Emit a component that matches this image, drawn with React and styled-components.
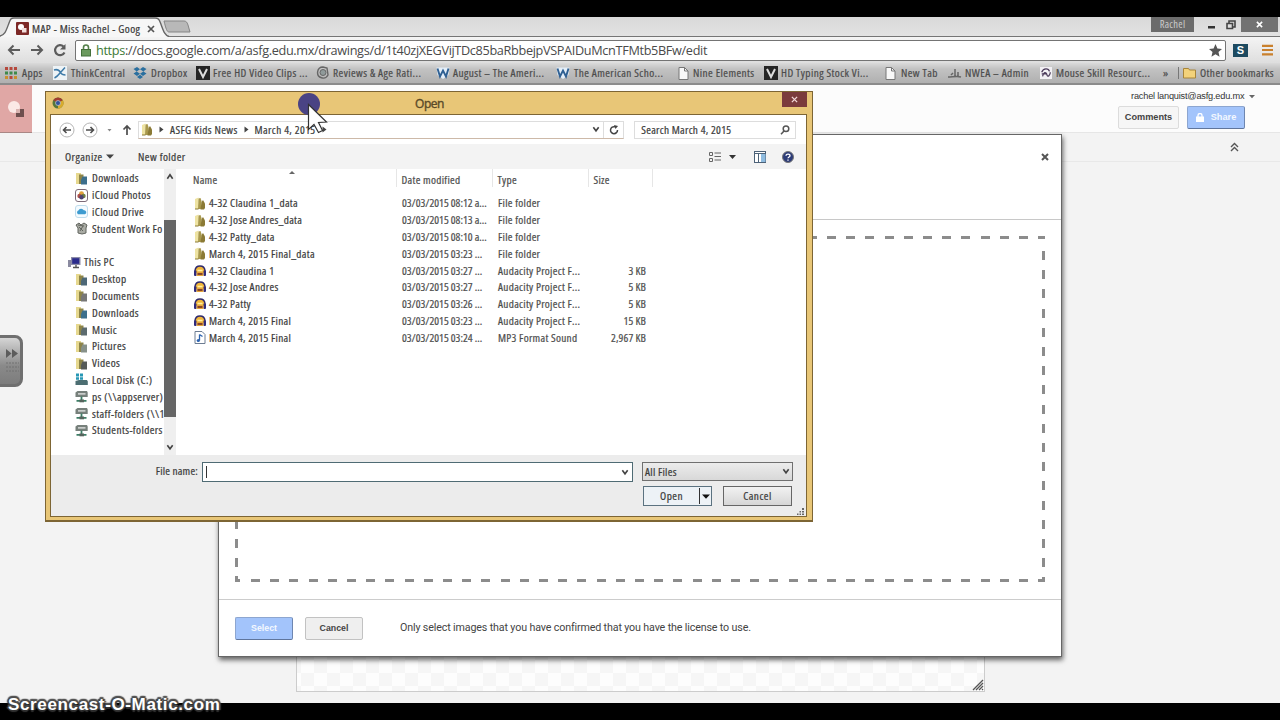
import React from 'react'
import styled, { createGlobalStyle, css } from 'styled-components'

const GlobalStyle = createGlobalStyle`
  * {
    box-sizing: border-box;
  }
  body {
    margin: 0;
    background: #000;
    overflow: hidden;
  }
`

const segoe = `"Open Sans", "Noto Sans", sans-serif`
const arial = `"Liberation Sans", Arial, sans-serif`

const Screen = styled.div`
  position: relative;
  width: 1280px;
  height: 720px;
  padding: 17px 0;
  background: #000;
  overflow: hidden;
  display: flex;
  flex-direction: column;
  font-family: ${segoe};
  font-size: 11.3px;
  font-stretch: 75%;
  letter-spacing: 0.3px;
  color: #444;
  white-space: nowrap;
`

/* ---------- browser ---------- */

const TabStrip = styled.div`
  height: 20px;
  flex: none;
  display: flex;
  align-items: flex-start;
  background: linear-gradient(#d9d9d9, #e2e2e2);
  border-bottom: 1px solid #757575;
`
const Tab = styled.div`
  position: relative;
  width: 168px;
  height: 20px;
  padding: 3px 9px 0 16px;
  display: flex;
  align-items: center;
`
const TabShape = styled.svg`
  position: absolute;
  left: 0;
  top: 0;
`
const TabIcon = styled.svg`
  position: relative;
  flex: none;
`
const TabTitle = styled.span`
  position: relative;
  width: 116px;
  padding-left: 3px;
  line-height: 16px;
  letter-spacing: 0.4px;
  color: #3a3a3a;
  -webkit-text-stroke: 0.2px #3a3a3a;
`
const TabClose = styled.svg`
  position: relative;
  margin-left: 2px;
`
const Spacer = styled.div`
  flex: 1;
`
const UserBadge = styled.div`
  width: 43px;
  height: 15px;
  margin-right: 10px;
  background: #6b6b6b;
  color: #ccc;
  font-size: 10.5px;
  line-height: 15px;
  text-align: center;
`
const WindowButton = styled.div`
  width: ${(p) => p.$w}px;
  height: 15px;
  display: flex;
  align-items: center;
  justify-content: center;
  background: ${(p) => (p.$dark ? '#727272' : 'transparent')};
`
const Toolbar = styled.div`
  height: 26px;
  flex: none;
  display: flex;
  align-items: center;
  background: linear-gradient(#f4f4f4, #dedede);
`
const NavButtons = styled.div`
  width: 75px;
  padding-left: 7px;
  display: flex;
  gap: 9px;
`
const UrlBar = styled.div`
  width: 1151px;
  height: 21px;
  padding: 0 3px 0 5px;
  display: flex;
  align-items: center;
  background: #fff;
  border: 1px solid #747474;
  border-radius: 2px;
`
const Url = styled.span`
  flex: 1;
  margin-left: 5px;
  font-size: 12.7px;
  line-height: 18px;
  font-stretch: 100%;
  letter-spacing: -0.34px;
  color: #4a4a4a;
  b {
    font-weight: 400;
    color: #3d7a35;
  }
`
const ExtIcon = styled.div`
  width: 15px;
  height: 13px;
  margin: 0 14px 0 7px;
  background: #1d4a60;
  color: #fff;
  font: 700 11px/13px ${arial};
  text-align: center;
`
const Bookmarks = styled.div`
  height: 22px;
  flex: none;
  padding-left: 4px;
  display: flex;
  align-items: center;
  background: linear-gradient(#dadada, #c2c2c2 30%, #b0b0b0);
  border-bottom: 2px solid #8b8b8b;
`
const Bookmark = styled.div`
  width: ${(p) => p.$w}px;
  flex: none;
  display: flex;
  align-items: center;
  line-height: 16px;
  letter-spacing: 0.42px;
  color: #4c4c4c;
  -webkit-text-stroke: 0.2px #4c4c4c;
  svg {
    flex: none;
    margin-right: ${(p) => p.$gap || 3}px;
  }
`
const BookmarkDivider = styled.div`
  width: 1px;
  height: 12px;
  margin-right: 4px;
  background: #777;
`

/* ---------- page ---------- */

const Page = styled.div`
  position: relative;
  flex: 1;
  background: #f3f3f3;
`
const DocHeader = styled.div`
  height: 48px;
  display: flex;
  justify-content: space-between;
  background: #fcfcfc;
  border-bottom: 1px solid #e6e6e6;
`
const DocLogo = styled.div`
  width: 32px;
  height: 48px;
  padding: 15px 0 0 7px;
  background: #e0a7a5;
  border-bottom: 1px solid #a98785;
`
const Account = styled.div`
  padding: 5px 25px 0 0;
  display: flex;
  flex-direction: column;
  align-items: flex-end;
  font: 9.2px/13px ${arial};
  letter-spacing: -0.2px;
  color: #333;
`
const Buttons = styled.div`
  display: flex;
  gap: 8px;
  margin: 3px 10px 0 0;
`
const DocToolbar = styled.div`
  height: 29px;
  padding: 9px 41px 0 0;
  display: flex;
  justify-content: flex-end;
  border-bottom: 1px solid #e8e8e8;
`
const Canvas = styled.div`
  width: 689px;
  height: 530px;
  margin-left: 296px;
  display: flex;
  align-items: flex-end;
  justify-content: flex-end;
  background: repeating-conic-gradient(#f6f6f6 0 25%, #fdfdfd 0 50%) 4px 3px / 26px 26px;
  border: 1px solid #ccc;
`
const GButton = styled.div`
  width: ${(p) => p.$w}px;
  height: 23px;
  display: flex;
  align-items: center;
  justify-content: center;
  gap: 7px;
  border: 1px solid #dcdcdc;
  border-radius: 2px;
  background: #f6f6f6;
  color: #444;
  font: 700 ${(p) => p.$size || 9.2}px/21px ${arial};
  letter-spacing: 0;
  ${(p) =>
    p.$primary &&
    css`
      background: #a3c4fb;
      border-color: #8da6d0 #6e86b0 #5f759c #8da6d0;
      color: #f4f8ff;
    `}
  ${(p) =>
    p.$grey &&
    css`
      background: #efefef;
      border-color: #c2c2c2;
    `}
`
const SideHandle = styled.div`
  position: absolute;
  left: -3px;
  top: 250px;
  width: 26px;
  height: 52px;
  padding: 10px 0 0 6px;
  background: linear-gradient(#d5d5d5, #8a8a8a 60%, #7c7c7c);
  border: 3px solid #6f6f6f;
  border-radius: 0 8px 8px 0;
`

/* ---------- picker ---------- */

const Picker = styled.div`
  position: absolute;
  left: 218px;
  top: 134px;
  width: 844px;
  height: 523px;
  display: flex;
  flex-direction: column;
  background: #fff;
  border: 1px solid #666;
  box-shadow: 1px 3px 5px rgba(0, 0, 0, 0.6);
`
const PickerHeader = styled.div`
  height: 85px;
  padding: 18px 12px 0 0;
  display: flex;
  justify-content: flex-end;
  align-items: flex-start;
  border-bottom: 1px solid #c8c8c8;
`
const DropZone = styled.div`
  flex: 1;
  margin: 16px 16px 17px;
  --h: repeating-linear-gradient(90deg, #8c8c8c 0 9px, transparent 9px 19.2px);
  --v: repeating-linear-gradient(180deg, #8c8c8c 0 9px, transparent 9px 19.2px);
  background:
    var(--h) 16px 0 / 100% 3px no-repeat,
    var(--h) 16px 100% / 100% 3px no-repeat,
    var(--v) 0 15px / 3px 100% no-repeat,
    var(--v) 100% 15px / 3px 100% no-repeat,
    linear-gradient(#8c8c8c, #8c8c8c) 0 0 / 5px 3px no-repeat,
    linear-gradient(#8c8c8c, #8c8c8c) 0 100% / 5px 3px no-repeat,
    linear-gradient(#8c8c8c, #8c8c8c) 0 100% / 3px 6px no-repeat;
`
const PickerFooter = styled.div`
  height: 57px;
  padding: 0 16px;
  display: flex;
  align-items: center;
  gap: 12px;
  border-top: 1px solid #ccc;
`
const License = styled.span`
  margin-left: 25px;
  font: 10.7px/14px Roboto, sans-serif;
  letter-spacing: -0.14px;
  color: #444;
`

/* ---------- open dialog ---------- */

const Dialog = styled.div`
  position: absolute;
  left: 45px;
  top: 91px;
  width: 768px;
  height: 431px;
  padding: 0 5px 3px 4px;
  display: flex;
  flex-direction: column;
  background: #e8c677;
  border: 1px solid #7d6534;
  border-width: 1px 1px 2px;
  color: #3c3c3c;
  -webkit-text-stroke: 0.2px #3c3c3c;
`
const TitleBar = styled.div`
  height: 22px;
  flex: none;
  display: grid;
  grid-template-columns: 1fr auto 1fr;
  align-items: center;
  padding-left: 2px;
  font-size: 12px;
  font-stretch: 100%;
  letter-spacing: -0.5px;
  color: #5a4a28;
  -webkit-text-stroke: 0.4px #5a4a28;
`
const CloseButton = styled.div`
  justify-self: end;
  align-self: start;
  width: 25px;
  height: 15px;
  display: flex;
  align-items: center;
  justify-content: center;
  background: #7b3b3c;
`
const Client = styled.div`
  flex: 1;
  min-height: 0;
  display: flex;
  flex-direction: column;
  background: #fff;
  border: 1px solid #7d6534;
`
const AddressRow = styled.div`
  height: 29px;
  flex: none;
  padding: 0 10px 0 8px;
  display: flex;
  align-items: center;
`
const Arrows = styled.div`
  width: 79px;
  display: flex;
  align-items: center;
`
const PathBox = styled.div`
  width: 487px;
  height: 18px;
  padding-left: 2px;
  display: flex;
  align-items: center;
  border: 1px solid #ddd;
  border-bottom-color: #cdb9a8;
`
const Crumb = styled.span`
  margin: 0 6px 0 6px;
  line-height: 16px;
  letter-spacing: 0.4px;
`
const PathFolder = styled.span`
  width: 18px;
  display: flex;
`
const RefreshBox = styled.div`
  width: 20px;
  height: 16px;
  margin-left: 3px;
  display: flex;
  align-items: center;
  justify-content: center;
  border-left: 1px solid #ddd;
`
const SearchBox = styled.div`
  width: 162px;
  height: 18px;
  margin-left: 10px;
  padding: 0 5px 0 6px;
  display: flex;
  align-items: center;
  justify-content: space-between;
  border: 1px solid #ddd;
`
const CommandBar = styled.div`
  height: 25px;
  flex: none;
  padding: 0 12px 0 14px;
  display: flex;
  align-items: center;
  background: #f3f3f3;
  letter-spacing: 0.45px;
  svg {
    flex: none;
  }
`
const Organize = styled.span`
  width: 73px;
  display: flex;
  align-items: center;
  gap: 3px;
`
const Body = styled.div`
  flex: 1;
  min-height: 0;
  display: flex;
`
const Tree = styled.div`
  width: 113px;
  padding-top: 1px;
  overflow: hidden;
`
const TreeItem = styled.div`
  height: 16.8px;
  padding-left: ${(p) => (p.$root ? 16 : 24)}px;
  display: flex;
  align-items: center;
  gap: ${(p) => (p.$root ? 3 : 4)}px;
  line-height: 16px;
  letter-spacing: 0.4px;
  svg {
    flex: none;
  }
`
const Scroll = styled.div`
  width: 12px;
  display: flex;
  flex-direction: column;
  align-items: center;
  background: #efefef;
  svg {
    margin: 4px 0;
  }
`
const Thumb = styled.div`
  width: 12px;
  height: 197px;
  margin: 36px 0 auto;
  background: #666;
`
const Files = styled.div`
  flex: 1;
`
const row = css`
  display: grid;
  grid-template-columns: 204px 96px 96px 64px;
  margin-left: 17px;
`
const HeadRow = styled.div`
  ${row}
  height: 26px;
`
const Head = styled.div`
  position: relative;
  height: 18px;
  padding: 2px 0 0 ${(p) => (p.$first ? 0 : 4.5)}px;
  border-right: 1px solid #e6e6e6;
  line-height: 18px;
  color: #555;
`
const SortMark = styled.svg`
  position: absolute;
  left: 95px;
  top: 1px;
`
const FileRow = styled.div`
  ${row}
  height: 16.8px;
  align-items: center;
  line-height: 16px;
`
const FileName = styled.span`
  padding-left: 1px;
  display: flex;
  align-items: center;
  gap: 3px;
`
const Cell = styled.span`
  padding-left: 5px;
  color: #555;
`
const DateCell = styled(Cell)`
  letter-spacing: 0;
`
const SizeCell = styled.span`
  padding-right: 7px;
  text-align: right;
  letter-spacing: 0.1px;
  color: #555;
`
const Footer = styled.div`
  height: 61px;
  flex: none;
  padding: 7px 13px 0 0;
  background: #ececec;
  position: relative;
`
const FooterLine = styled.div`
  display: flex;
  justify-content: flex-end;
  align-items: flex-start;
  margin-bottom: 4px;
  line-height: 18px;
`
const ButtonLine = styled(FooterLine)`
  gap: 11px;
  padding-right: 1px;
`
const FileLabel = styled.span`
  margin-right: 4px;
  letter-spacing: 0.2px;
`
const FileInput = styled.div`
  width: 431px;
  height: 20px;
  padding: 0 3px;
  display: flex;
  align-items: center;
  justify-content: space-between;
  background: #fff;
  border: 1px solid #4f6b74;
`
const Caret = styled.div`
  width: 1px;
  height: 12px;
  background: #333;
`
const TypeSelect = styled.div`
  width: 151px;
  height: 19px;
  margin-left: 9px;
  padding: 0 2px;
  display: flex;
  align-items: center;
  justify-content: space-between;
  background: linear-gradient(#ececec, #d8d8d8);
  border: 1px solid #707070;
`
const DlgButton = styled.div`
  width: 69px;
  height: 20px;
  display: flex;
  align-items: center;
  justify-content: center;
  background: linear-gradient(#f2f2f2, #d6d6d6);
  border: 1px solid #666;
  line-height: 18px;
  letter-spacing: 0.5px;
`
const SplitButton = styled(DlgButton)`
  background: #edf2f6;
  border-color: #5b7280;
  justify-content: space-between;
  padding: 0 1px 0 16px;
`
const SplitArrow = styled.span`
  height: 16px;
  padding-left: 2px;
  display: flex;
  align-items: center;
  border-left: 1px solid #333;
`
const Grip = styled.svg`
  position: absolute;
  right: 2px;
  bottom: 1px;
`

/* ---------- overlays ---------- */

const Pointer = styled.svg`
  position: absolute;
  left: 297px;
  top: 92px;
`
const Watermark = styled.div`
  position: absolute;
  left: 8px;
  top: 694px;
  font: 700 17px/22px ${arial};
  letter-spacing: 0.64px;
  color: #fff;
  text-shadow: 0 0 2px #444, 2px 0 1px #444, -2px 0 1px #444, 0 -2px 1px #555, 0 2px 1px #333,
    1px -2px 1px #555, -1px -2px 1px #555;
`

/* ---------- drawings ---------- */

function Chevron({ up, w = 9, color = '#444' }) {
  return (
    <svg width={w} height="7" viewBox="0 0 9 7" fill="none" stroke={color} strokeWidth="1.8">
      <path d={up ? 'M1.5 6 4.5 1.5 7.5 6' : 'M1.5 1 4.5 5 7.5 1'} />
    </svg>
  )
}

function Triangle({ right, size = 8, color = '#444' }) {
  return (
    <svg width={right ? 5 : size} height={right ? 7 : 5} viewBox={right ? '0 0 5 7' : '0 0 8 5'}>
      <path d={right ? 'M.5 .5 4.5 3.5 .5 6.5z' : 'M0 .5h8L4 4.8z'} fill={color} />
    </svg>
  )
}

function Cross({ size = 8, color = '#444', sw = 1.8 }) {
  return (
    <svg width={size} height={size} viewBox="0 0 8 8" stroke={color} strokeWidth={sw}>
      <path d="M1 1l6 6M7 1l-6 6" />
    </svg>
  )
}

function Folder({ accent = '#8b7a35' }) {
  return (
    <svg width="12" height="13" viewBox="0 0 12 13">
      <path d="M1 2 4.500 .5v11.500H1z" fill="#eee3a2" />
      <path d="M4.500 1.500l2-.5 1 3v8H4z" fill="#a9994d" />
      <path d="M7.500 5l1.500-2 2 3.500V11l-1 1.500H6.500z" fill={accent} />
      <path d="M1 12h3.500" stroke="#8a7a3a" />
    </svg>
  )
}

function TreeIcon({ kind }) {
  if (kind === 'photos')
    return (
      <svg width="13" height="13" viewBox="0 0 13 13">
        <rect x=".5" y=".5" width="12" height="12" rx="2.5" fill="#fff" stroke="#7b6a78" />
        <circle cx="6.5" cy="4.6" r="2.4" fill="#e0a13a" />
        <circle cx="4.6" cy="7" r="2.3" fill="#b0524c" />
        <circle cx="8.4" cy="7" r="2.3" fill="#6f7f45" />
        <circle cx="6.5" cy="8.3" r="2.2" fill="#4c4272" />
      </svg>
    )
  if (kind === 'drive')
    return (
      <svg width="13" height="13" viewBox="0 0 13 13">
        <rect x=".5" y=".5" width="12" height="12" rx="2.5" fill="#f4fbff" stroke="#bfdcec" />
        <path d="M3 9.2a2 2 0 0 1 .4-3.6 3 3 0 0 1 5.4-.4 2.1 2.1 0 0 1 1.2 4z" fill="#3d9bd0" />
      </svg>
    )
  if (kind === 'student')
    return (
      <svg width="13" height="13" viewBox="0 0 13 13" fill="#a9aba4" stroke="#61645e">
        <path d="M1 3l3-2 2 2 3-2 3 2-1 3v5l-4 1-4-1V6z" />
        <path d="M4 5l4 4M8 4L5 9M3 3l6 1" fill="none" />
      </svg>
    )
  if (kind === 'pc')
    return (
      <svg width="14" height="13" viewBox="0 0 14 13">
        <rect x="1" y="4" width="3" height="7" fill="#8a8aa0" />
        <rect x="4" y="1" width="9.5" height="8" fill="#8d8da8" />
        <rect x="5.2" y="2.2" width="7" height="5.6" fill="#2b2b8c" />
        <path d="M6 11.5h6M9 9v2" stroke="#555" strokeWidth="1.4" />
      </svg>
    )
  if (kind === 'disk')
    return (
      <svg width="13" height="13" viewBox="0 0 13 13">
        <path d="M1 .5h3v3H1zM5 .5h3v3H5zM1 4.3h3v2.5H1zM5 4.3h3v2.5H5z" fill="#2797b5" />
        <path d="M.5 8 4 7h8l.8 1.5V12H.5z" fill="#4c6e72" />
      </svg>
    )
  if (kind === 'net')
    return (
      <svg width="13" height="13" viewBox="0 0 13 13">
        <path d="M.500 2.500 2.500 1h9.500l.7 1.500v4.500H.500z" fill="#77807b" />
        <path d="M3 3.900h7.500" stroke="#eee" strokeWidth="1.200" />
        <path d="M6.500 6.500V10M1.500 10.800h10" stroke="#3d7d66" strokeWidth="1.800" />
        <rect x="4.500" y="9.500" width="4.500" height="2.800" fill="#57645d" />
      </svg>
    )
  return (
    <svg width="13" height="13" viewBox="0 0 13 13">
      <path d="M1 1h5v11H1z" fill="#e6d88f" />
      <path d="M4 2.500h4.500V12H4z" fill="#8d8449" />
      <path d="M7.500 4.500H12V12.500H6V8z" fill={kind} />
    </svg>
  )
}

function Audacity() {
  return (
    <svg width="12" height="12" viewBox="0 0 12 12">
      <path d="M1 8V5.500C1.300 2.800 3.200 1 6 1s4.700 1.800 5 4.500V8" fill="#f0b53a" stroke="#2f2a6c" strokeWidth="1.500" />
      <rect x="0" y="5.500" width="2.600" height="5.500" rx="1" fill="#2f2a7c" />
      <rect x="9.400" y="5.500" width="2.600" height="5.500" rx="1" fill="#2f2a7c" />
      <path d="M2.600 6.500h6.800V11H2.600z" fill="#e8a83c" />
      <path d="M3.500 9h5" stroke="#7d3b25" strokeWidth="1.800" />
      <path d="M3.500 5.500h5" stroke="#fff0a0" strokeWidth="1.600" />
    </svg>
  )
}

function Mp3() {
  return (
    <svg width="12" height="13" viewBox="0 0 12 13">
      <path d="M1 .5h7l3 3v9H1z" fill="#fff" stroke="#6c7c92" />
      <path d="M5.500 3.500v6M5.500 3.500l3 2" stroke="#2b62b0" strokeWidth="1.300" fill="none" />
      <circle cx="4.300" cy="9.500" r="1.600" fill="#2b62b0" />
    </svg>
  )
}

function MarkIcon({ kind }) {
  const box = { width: 14, height: 14, viewBox: '0 0 14 14' }
  switch (kind) {
    case 'apps':
      return (
        <svg {...box}>
          {['#b5483c', '#3f8a4c', '#c9902d'].map((c, y) =>
            [0, 1, 2].map((x) => (
              <rect key={x + c} x={1 + x * 4.5} y={1 + y * 4.5} width="3" height="3" fill={x === 1 && y !== 1 ? '#b5483c' : c} />
            ))
          )}
        </svg>
      )
    case 'think':
      return (
        <svg {...box}>
          <rect width="14" height="14" fill="#eef3f6" />
          <path d="M1 4c3-1 5 0 6.500 2.500L12 1.500M1.500 12c2-1 4-3 6-5.500 1 2 3 2.500 5 2.500" stroke="#3f7ba8" strokeWidth="1.500" fill="none" />
        </svg>
      )
    case 'dropbox':
      return (
        <svg {...box} fill="#2a6f9f">
          <path d="M4 1 7 3.200 3.700 5.500.500 3zM10 1l3.500 2-3.200 2.500L7 3.200zM.500 7.500l3.200-2L7 7.700 4 10zM13.500 7.500l-3.200-2L7 7.700l3 2.300zM4 11l3-2.300L10 11l-3 2z" />
        </svg>
      )
    case 'v':
      return (
        <svg {...box}>
          <rect width="14" height="14" fill="#252525" />
          <path d="M3 3l4 8 4-8" stroke="#ddd" strokeWidth="2" fill="none" />
        </svg>
      )
    case 'review':
      return (
        <svg {...box}>
          <path d="M7 1a5.500 5.500 0 1 0 5 8l-1-7z" fill="none" stroke="#666" strokeWidth="1.400" />
          <circle cx="7" cy="6.500" r="3" fill="#8f9a9a" stroke="#666" />
        </svg>
      )
    case 'w':
      return (
        <svg {...box}>
          <path d="M.500 1.500h13L12.500 9 7 13 1.500 9z" fill="#e4eef8" />
          <path d="M1.500 2.500l2.500 8 3-6 3 6 2.500-8" stroke="#2f6093" strokeWidth="1.900" fill="none" />
        </svg>
      )
    case 'doc':
      return (
        <svg width="11" height="13" viewBox="0 0 11 13">
          <path d="M1 .500h5.500l3.500 3.500v8.500H1z" fill="#f8f8f8" stroke="#777" />
          <path d="M6.500.500V4H10" fill="none" stroke="#777" />
        </svg>
      )
    case 'nwea':
      return (
        <svg {...box}>
          <path d="M0 11c4 0 10-1 13 0M3 9l2-2M7 10V3M10 10V6" stroke="#666" strokeWidth="1.500" fill="none" />
        </svg>
      )
    case 'mouse':
      return (
        <svg {...box} width="12">
          <rect width="14" height="14" fill="#f2f0f4" />
          <path d="M2 6c2-5 8-5 9-1M3 11c1-5 4-6 5-2s4 0 4-3M2 8h6" stroke="#4d3c5c" strokeWidth="1.500" fill="none" />
        </svg>
      )
    default:
      return (
        <svg width="13" height="12" viewBox="0 0 13 12">
          <path d="M.500 1.500h5l1 1.500h6v8H.500z" fill="#f3d27a" stroke="#a8853a" />
        </svg>
      )
  }
}

/* ---------- data ---------- */

const bookmarks = [
  { icon: 'apps', label: 'Apps', w: 49, gap: 4 },
  { icon: 'think', label: 'ThinkCentral', w: 80, gap: 4 },
  { icon: 'dropbox', label: 'Dropbox', w: 63, gap: 4 },
  { icon: 'v', label: 'Free HD Video Clips ...', w: 120 },
  { icon: 'review', label: 'Reviews & Age Rati...', w: 120 },
  { icon: 'w', label: 'August – The Ameri...', w: 120 },
  { icon: 'w', label: 'The American Scho...', w: 122, gap: 4 },
  { icon: 'doc', label: 'Nine Elements', w: 86, gap: 4 },
  { icon: 'v', label: 'HD Typing Stock Vi...', w: 121 },
  { icon: 'doc', label: 'New Tab', w: 63, gap: 5 },
  { icon: 'nwea', label: 'NWEA – Admin', w: 92 },
  { icon: 'mouse', label: 'Mouse Skill Resourc...', w: 123, gap: 4 },
]

const tree = [
  ['#3c6f8c', 'Downloads'],
  ['photos', 'iCloud Photos'],
  ['drive', 'iCloud Drive'],
  ['student', 'Student Work Fo'],
  null,
  ['pc', 'This PC'],
  ['#4d6877', 'Desktop'],
  ['#777', 'Documents'],
  ['#3c6f8c', 'Downloads'],
  ['#5c6b6e', 'Music'],
  ['#87918a', 'Pictures'],
  ['#555a58', 'Videos'],
  ['disk', 'Local Disk (C:)'],
  ['net', 'ps (\\\\appserver) ('],
  ['net', "staff-folders (\\\\1'"],
  ['net', 'Students-folders'],
]

const files = [
  ['folder', '4-32 Claudina 1_data', '03/03/2015 08:12 a...', 'File folder', ''],
  ['folder', '4-32 Jose Andres_data', '03/03/2015 08:13 a...', 'File folder', ''],
  ['folder', '4-32 Patty_data', '03/03/2015 08:10 a...', 'File folder', ''],
  ['folder', 'March 4, 2015 Final_data', '03/03/2015 03:23 ...', 'File folder', ''],
  ['audacity', '4-32 Claudina 1', '03/03/2015 03:27 ...', 'Audacity Project F...', '3 KB'],
  ['audacity', '4-32 Jose Andres', '03/03/2015 03:27 ...', 'Audacity Project F...', '5 KB'],
  ['audacity', '4-32 Patty', '03/03/2015 03:26 ...', 'Audacity Project F...', '5 KB'],
  ['audacity', 'March 4, 2015 Final', '03/03/2015 03:23 ...', 'Audacity Project F...', '15 KB'],
  ['mp3', 'March 4, 2015 Final', '03/03/2015 03:24 ...', 'MP3 Format Sound', '2,967 KB'],
]

const fileIcons = { folder: <Folder />, audacity: <Audacity />, mp3: <Mp3 /> }

function Browser() {
  return (
    <>
      <TabStrip>
        <Tab>
          <TabShape width="200" height="20" viewBox="0 0 200 20">
            <path d="M0 19.500C5 18 6 14 9 6c1.500-4 2-5 5-5h141c3 0 4 1 5.500 5 3 8 4 12 7.500 13.500V20H0z" fill="#f7f7f7" />
            <path d="M0 19C5 18 6 14 9 6c1.500-4 2-5 5-5h141c3 0 4 1 5.500 5 3 8 4 12 8.500 13.500" fill="none" stroke="#666" strokeWidth="1.400" />
            <path d="M164 4h20c2 0 3 1 4 4l2 7h-21c-2 0-3-3-5-11z" fill="#b8b8b8" stroke="#858585" />
          </TabShape>
          <TabIcon width="13" height="13" viewBox="0 0 13 13">
            <rect width="13" height="13" rx="1" fill="#7d2927" />
            <circle cx="5" cy="5" r="3" fill="#fff" />
            <rect x="6" y="6" width="4.500" height="4.500" fill="#f1dedc" />
          </TabIcon>
          <TabTitle>MAP - Miss Rachel - Goog</TabTitle>
          <TabClose width="8" height="8" viewBox="0 0 8 8" stroke="#555" strokeWidth="1.700">
            <path d="M1 1l6 6M7 1l-6 6" />
          </TabClose>
        </Tab>
        <Spacer />
        <UserBadge>Rachel</UserBadge>
        <WindowButton $w={16}>
          <svg width="8" height="9">
            <rect y="6" width="7" height="2.500" fill="#333" />
          </svg>
        </WindowButton>
        <WindowButton $w={21}>
          <svg width="10" height="10" viewBox="0 0 10 10" fill="none" stroke="#444" strokeWidth="1.600">
            <path d="M1 3.500h5.500v5H1zM3 3V1h6v6H7" />
          </svg>
        </WindowButton>
        <WindowButton $w={37} $dark>
          <Cross size={7} color="#fff" />
        </WindowButton>
        <WindowButton $w={2} />
      </TabStrip>
      <Toolbar>
        <NavButtons>
          <svg width="14" height="14" viewBox="0 0 14 14" fill="none" stroke="#5c5c5c" strokeWidth="2">
            <path d="M13 7H2M6.500 2.500 2 7l4.500 4.500" />
          </svg>
          <svg width="14" height="14" viewBox="0 0 14 14" fill="none" stroke="#5c5c5c" strokeWidth="2">
            <path d="M1 7h11M7.500 2.500 12 7l-4.500 4.500" />
          </svg>
          <svg width="14" height="14" viewBox="0 0 14 14" fill="none" stroke="#5c5c5c" strokeWidth="2.200">
            <path d="M11.500 9.500A5 5 0 1 1 10.500 3.500" />
            <path d="M12.500 1v5.500H7z" fill="#5c5c5c" stroke="none" />
          </svg>
        </NavButtons>
        <UrlBar>
          <svg width="10" height="13" viewBox="0 0 10 13">
            <path d="M2.500 6V3.500a2.500 2.500 0 0 1 5 0V6" fill="none" stroke="#55804b" strokeWidth="1.600" />
            <rect x=".500" y="5.500" width="9" height="6.500" fill="#6b9a5e" stroke="#44703b" />
          </svg>
          <Url>
            <b>https</b>://docs.google.com/a/asfg.edu.mx/drawings/d/1t40zjXEGVijTDc85baRbbejpVSPAIDuMcnTFMtb5BFw/edit
          </Url>
          <svg width="13" height="13" viewBox="0 0 24 24" fill="#555">
            <path d="M12 0l3.500 8.300 8.500.700-6.500 5.800 2 8.700L12 18.800l-7.500 4.700 2-8.700L0 9l8.500-.700z" />
          </svg>
        </UrlBar>
        <ExtIcon>S</ExtIcon>
        <svg width="11" height="12" viewBox="0 0 11 12" stroke="#c9802d" strokeWidth="2.200">
          <path d="M0 1.800h11M0 6h11M0 10.300h11" />
        </svg>
      </Toolbar>
      <Bookmarks>
        {bookmarks.map((b) => (
          <Bookmark key={b.label} $w={b.w} $gap={b.gap}>
            <MarkIcon kind={b.icon} />
            {b.label}
          </Bookmark>
        ))}
        <Bookmark $w={15}>»</Bookmark>
        <BookmarkDivider />
        <Bookmark $w={96} $gap={4}>
          <MarkIcon kind="folder" />
          Other bookmarks
        </Bookmark>
      </Bookmarks>
    </>
  )
}

function Document() {
  return (
    <Page>
      <DocHeader>
        <DocLogo>
          <svg width="18" height="18" viewBox="0 0 18 18">
            <circle cx="7" cy="7" r="6" fill="#fbe9e6" />
            <rect x="9" y="9" width="8" height="8" fill="#6e4f4e" />
            <path d="M9 9h4v4H9z" fill="#d9b3b0" />
          </svg>
        </DocLogo>
        <Account>
          <span>
            rachel lanquist@asfg.edu.mx &nbsp;
            <Triangle size={6} color="#666" />
          </span>
          <Buttons>
            <GButton $w={61}>Comments</GButton>
            <GButton $w={58} $primary>
              <svg width="8" height="9" viewBox="0 0 8 9">
                <path d="M2 4V2.500a2 2 0 0 1 4 0V4" fill="none" stroke="#fff" strokeWidth="1.300" />
                <rect y="3.500" width="8" height="5.500" fill="#fff" />
              </svg>
              Share
            </GButton>
          </Buttons>
        </Account>
      </DocHeader>
      <DocToolbar>
        <svg width="9" height="10" viewBox="0 0 9 10" fill="none" stroke="#555" strokeWidth="1.400">
          <path d="M1 5l3.500-3.500L8 5M1 9l3.500-3.500L8 9" />
        </svg>
      </DocToolbar>
      <Canvas>
        <svg width="12" height="12" viewBox="0 0 12 12" stroke="#555" strokeWidth="1.300">
          <path d="M1 11 11 1M4 11l7-7M7 11l4-4M10 11l1-1" />
        </svg>
      </Canvas>
      <SideHandle>
        <svg width="13" height="28" viewBox="0 0 13 28">
          <path d="M0 1l5.500 4.500L0 10zM6 1l6 4.500L6 10z" fill="#5c5c5c" />
          <path d="M0 15h13M0 19h13M0 23h13" stroke="#707070" strokeDasharray="2 1" />
        </svg>
      </SideHandle>
    </Page>
  )
}

function FilePicker() {
  return (
    <Picker>
      <PickerHeader>
        <Cross size={8} color="#555" sw={2} />
      </PickerHeader>
      <DropZone />
      <PickerFooter>
        <GButton $w={58} $size={8.8} $primary>
          Select
        </GButton>
        <GButton $w={58} $size={8.8} $grey>
          Cancel
        </GButton>
        <License>Only select images that you have confirmed that you have the license to use.</License>
      </PickerFooter>
    </Picker>
  )
}

function OpenDialog() {
  return (
    <Dialog>
      <TitleBar>
        <svg width="12" height="12" viewBox="0 0 12 12">
          <circle cx="6" cy="6" r="5.500" fill="#55763a" />
          <path d="M6 6 1.200 3.200A5.500 5.500 0 0 1 10.800 3.200z" fill="#a13c30" />
          <path d="M6 6l4.800-2.800A5.500 5.500 0 0 1 6 11.500z" fill="#d9ab2c" />
          <circle cx="6" cy="6" r="2.500" fill="#32539a" stroke="#ddd" strokeWidth=".600" />
        </svg>
        <span>Open</span>
        <CloseButton>
          <Cross size={7} color="#f3dada" sw={1.5} />
        </CloseButton>
      </TitleBar>
      <Client>
        <AddressRow>
          <Arrows>
            <svg width="79" height="16" viewBox="0 0 79 16" fill="none" stroke="#4d4d4d">
              <circle cx="8" cy="8" r="7" stroke="#b5b5b5" />
              <path d="M12 8H5M7.500 5 4.500 8l3 3" strokeWidth="1.600" />
              <circle cx="31" cy="8" r="7" stroke="#b5b5b5" />
              <path d="M27 8h7M31.500 5l3 3-3 3" strokeWidth="1.600" />
              <path d="M48.500 7h4l-2 2.500z" fill="#888" stroke="none" />
              <path d="M68 13V4M64.500 7.500 68 4l3.500 3.500" strokeWidth="1.700" />
            </svg>
          </Arrows>
          <PathBox>
            <PathFolder>
              <Folder />
            </PathFolder>
            <Triangle right />
            <Crumb>ASFG Kids News</Crumb>
            <Triangle right />
            <Crumb>March 4, 2015</Crumb>
            <Triangle right />
            <Spacer />
            <Chevron w={8} />
            <RefreshBox>
              <svg width="10" height="10" viewBox="0 0 10 10" fill="none" stroke="#444" strokeWidth="1.500">
                <path d="M8.500 5A3.500 3.500 0 1 1 6 1.800" />
                <path d="M5 0l4 1-2.500 3z" fill="#444" stroke="none" />
              </svg>
            </RefreshBox>
          </PathBox>
          <SearchBox>
            Search March 4, 2015
            <svg width="10" height="10" viewBox="0 0 10 10" fill="none" stroke="#555" strokeWidth="1.500">
              <circle cx="6" cy="3.800" r="2.800" />
              <path d="M4 6 1 9.300" />
            </svg>
          </SearchBox>
        </AddressRow>
        <CommandBar>
          <Organize>
            Organize <Triangle />
          </Organize>
          New folder
          <Spacer />
          <svg width="73" height="14" viewBox="0 0 73 14">
            <path d="M.500 2.500h3v3h-3zM.500 8.500h3v3h-3zM5.500 3H12M5.500 6.500H12M5.500 10H12" fill="none" stroke="#666" />
            <path d="M20 5h7l-3.500 4z" fill="#333" />
            <rect x="45.500" y="1.500" width="11" height="11" fill="#fff" stroke="#4d6278" />
            <path d="M45.500 3.500h11M49.500 3.500v9" stroke="#4d6278" />
            <rect x="52" y="4" width="4.500" height="8" fill="#8fbce0" />
          </svg>
          <svg width="12" height="12" viewBox="0 0 12 12">
            <circle cx="6" cy="6" r="5.500" fill="#2d3c78" stroke="#777" />
            <path d="M4 4.700C4 2.500 8 2.500 8 4.700 8 6 6 6 6 7.300M6 8.500v1.300" stroke="#fff" strokeWidth="1.300" fill="none" />
          </svg>
        </CommandBar>
        <Body>
          <Tree>
            {tree.map((t, i) => (
              <TreeItem key={i} $root={t && t[0] === 'pc'}>
                {t && <TreeIcon kind={t[0]} />}
                {t && t[1]}
              </TreeItem>
            ))}
          </Tree>
          <Scroll>
            <Chevron up w={8} />
            <Thumb />
            <Chevron w={8} />
          </Scroll>
          <Files>
            <HeadRow>
              <Head $first>
                <SortMark width="8" height="4" viewBox="0 0 8 4">
                  <path d="M1 4l3-3 3 3z" fill="#666" />
                </SortMark>
                Name
              </Head>
              <Head>Date modified</Head>
              <Head>Type</Head>
              <Head>Size</Head>
            </HeadRow>
            {files.map(([kind, name, date, type, size]) => (
              <FileRow key={kind + name}>
                <FileName>
                  {fileIcons[kind]}
                  {name}
                </FileName>
                <DateCell>{date}</DateCell>
                <Cell>{type}</Cell>
                <SizeCell>{size}</SizeCell>
              </FileRow>
            ))}
          </Files>
        </Body>
        <Footer>
          <FooterLine>
            <FileLabel>File name:</FileLabel>
            <FileInput>
              <Caret />
              <Chevron w={8} />
            </FileInput>
            <TypeSelect>
              All Files
              <Chevron w={8} />
            </TypeSelect>
          </FooterLine>
          <ButtonLine>
            <SplitButton>
              Open
              <SplitArrow>
                <Triangle color="#111" />
              </SplitArrow>
            </SplitButton>
            <DlgButton>Cancel</DlgButton>
          </ButtonLine>
          <Grip width="7" height="7" fill="#666">
            <path d="M5 0h2v2H5zM5 3h2v1.500H5zM2.500 3h1.500v1.500H2.500zM5 5.500h2V7H5zM2.500 5.500h1.500V7H2.500zM0 5.500h1.500V7H0z" />
          </Grip>
        </Footer>
      </Client>
    </Dialog>
  )
}

export default function App() {
  return (
    <Screen>
      <GlobalStyle />
      <Browser />
      <Document />
      <FilePicker />
      <OpenDialog />
      <Pointer width="34" height="44" viewBox="0 0 34 44">
        <circle cx="12" cy="12" r="11" fill="#4a4384" />
        <path d="M11.500 12.500v25l5.500-5 4.500 8 4-2-4-8 8-.5z" fill="#fff" stroke="#333" strokeWidth="1.200" />
      </Pointer>
      <Watermark>Screencast-O-Matic.com</Watermark>
    </Screen>
  )
}
